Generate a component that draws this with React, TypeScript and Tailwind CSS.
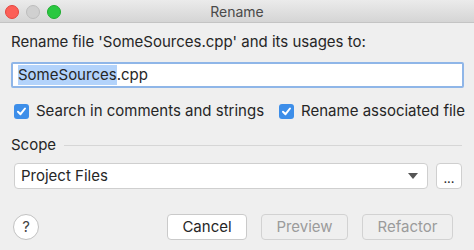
import React from "react";

export default function App() {
  const font = { fontFamily: "Inter, 'Liberation Sans', sans-serif" };
  return (
    <div className="w-[474px] h-[250px] bg-[#efefef] flex flex-col text-[#262626] overflow-hidden" style={font}>
      {/* Title bar */}
      <div className="relative h-[23px] shrink-0 bg-gradient-to-b from-[#ebebeb] to-[#d5d5d5] border-b border-[#c4c4c4] flex items-center justify-center">
        <div className="absolute left-[5px] top-[5px] flex gap-[7px]">
          <div className="w-[14px] h-[14px] rounded-full bg-[#fc5f57] border border-[#e4453e]" />
          <div className="w-[14px] h-[14px] rounded-full bg-[#d0d0d0] border border-[#bdbdbd]" />
          <div className="w-[14px] h-[14px] rounded-full bg-[#2ac840] border border-[#1eac2f]" />
        </div>
        <span className="text-[14px] text-[#4a4a4a]">Rename</span>
      </div>

      <div className="flex flex-col px-[11px] pt-[9px]">
        <div className="text-[15px] leading-[20px] whitespace-nowrap">Rename file 'SomeSources.cpp' and its usages to:</div>

        <div className="mt-[10px] h-[26px] w-[453px] bg-white border-2 border-[#8fb6e8] rounded-[2px] flex items-center pl-[5px]">
          <span className="text-[15px] leading-[20px] bg-[#b3d3fb]">SomeSources</span>
          <span className="text-[15px] leading-[20px]">.cpp</span>
        </div>

        <div className="mt-[14px] flex items-center h-[18px] whitespace-nowrap">
          <Check />
          <span className="ml-[7px] text-[15px] shrink-0">Search in comments and strings</span>
          <div className="ml-[12px] flex items-center shrink-0">
            <Check />
            <span className="ml-[7px] text-[15px]">Rename associated file</span>
          </div>
        </div>

        <div className="mt-[15px] flex items-center">
          <span className="text-[15px] leading-[20px]">Scope</span>
          <div className="ml-[8px] flex-1 h-px bg-[#d6d6d6] mr-[1px]" />
        </div>

        <div className="mt-[8px] flex items-center">
          <div className="ml-[3px] w-[414px] h-[26px] bg-white border border-[#cfcfcf] rounded-[4px] flex items-center justify-between pl-[6px] pr-[9px]">
            <span className="text-[15px]">Project Files</span>
            <svg width="10" height="6" viewBox="0 0 10 6"><path d="M0 0 L10 0 L5 6 Z" fill="#555" /></svg>
          </div>
          <div className="ml-[8px] w-[26px] h-[26px] bg-white border border-[#cfcfcf] rounded-[4px] flex items-center justify-center text-[13px] leading-none pt-[5px]">
            ...
          </div>
        </div>

        <div className="mt-[25px] flex items-center">
          <div className="ml-[2px] w-[26px] h-[26px] rounded-full bg-white border border-[#c2c2c2] flex items-center justify-center text-[15px] text-[#444]">?</div>
          <div className="ml-auto flex items-center gap-[14px] mr-[10px]">
            <div className="w-[80px] h-[26px] bg-white border border-[#cacaca] rounded-[4px] flex items-center justify-center text-[15px]">Cancel</div>
            <div className="w-[87px] h-[26px] border border-[#d2d2d2] rounded-[4px] flex items-center justify-center text-[15px] text-[#9b9b9b]">Preview</div>
            <div className="w-[91px] h-[26px] border border-[#d2d2d2] rounded-[4px] flex items-center justify-center text-[15px] text-[#9b9b9b]">Refactor</div>
          </div>
        </div>
      </div>
    </div>
  );
}

function Check() {
  return (
    <div className="ml-[3px] w-[15px] h-[15px] shrink-0 rounded-[3px] bg-[#3d8ee9] flex items-center justify-center">
      <svg width="11" height="11" viewBox="0 0 11 11">
        <path d="M2 5.8 L4.5 8.2 L9 2.5" stroke="white" strokeWidth="2" fill="none" strokeLinecap="round" strokeLinejoin="round" />
      </svg>
    </div>
  );
}
